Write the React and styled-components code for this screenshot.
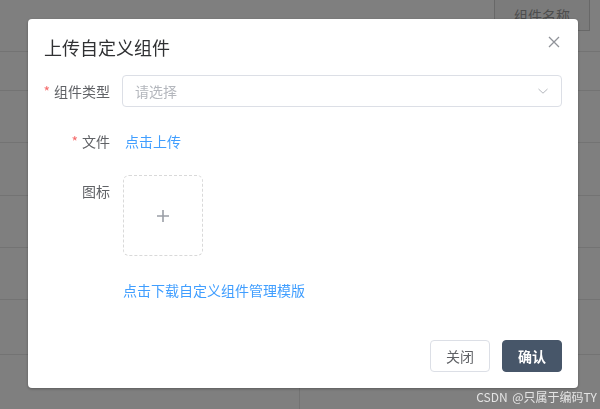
// Libs
import React from 'react';
import styled, { createGlobalStyle } from 'styled-components';

// Styles
const GlobalStyle = createGlobalStyle`
	html, body {
		margin: 0;
		padding: 0;
		width: 600px;
		height: 409px;
		overflow: hidden;
		background: #fff;
		font-family: 'Noto Sans CJK SC', 'Noto Sans', sans-serif;
	}
	* {
		box-sizing: border-box;
	}
`;

const Page = styled.div`
	position: relative;
	width: 600px;
	height: 409px;
	display: flex;
	flex-direction: column;
	background: #fff;
`;

const TableRow = styled.div`
	height: ${(props) => props.h}px;
	flex-shrink: 0;
	display: grid;
	grid-template-columns: 300px 1fr;
	border-bottom: ${(props) => (props.last ? 'none' : '1px solid #e6e6e6')};
`;

const TableCell = styled.div`
	border-right: ${(props) => (props.divider ? '1px solid #e6e6e6' : 'none')};
	display: flex;
	justify-content: flex-end;
	align-items: flex-start;
`;

const HeaderTab = styled.div`
	margin-right: 10px;
	width: 96px;
	height: 31px;
	display: flex;
	justify-content: center;
	align-items: center;
	border: 1px solid #d0d0d0;
	border-top: none;
	border-radius: 0 0 0 4px;
	background: #f7f7f7;
	color: #9a9a9a;
	font-size: 14px;
`;

const Overlay = styled.div`
	position: fixed;
	top: 0;
	left: 0;
	right: 0;
	bottom: 0;
	padding: 19px 0 0 28px;
	background: rgba(0, 0, 0, 0.5);
	z-index: 5;
`;

const Dialog = styled.div`
	width: 550px;
	height: 369px;
	display: flex;
	flex-direction: column;
	border-radius: 4px;
	background: #fff;
	box-shadow: 0 1px 3px rgba(0, 0, 0, 0.3);
`;

const DialogHeader = styled.div`
	padding: 16px 16px 0 16px;
	height: 40px;
	display: flex;
	justify-content: space-between;
	align-items: flex-start;
`;

const DialogTitle = styled.span`
	color: #303133;
	font-size: 18px;
	line-height: 24px;
`;

const CloseButton = styled.button`
	margin-right: 0;
	margin-top: -1px;
	padding: 0;
	width: 16px;
	height: 16px;
	border: none;
	background: transparent;
	cursor: pointer;
	display: flex;
	justify-content: center;
	align-items: center;
`;

const DialogBody = styled.div`
	padding: 16px 16px 0 0;
	flex: 1;
	display: flex;
	flex-direction: column;
`;

const FormRow = styled.div`
	margin-bottom: ${(props) => props.gap ?? 18}px;
	display: flex;
	align-items: flex-start;
`;

const FormLabel = styled.label`
	padding-right: 12px;
	width: 94px;
	flex-shrink: 0;
	text-align: right;
	color: #606266;
	font-size: 14px;
	line-height: 32px;
`;

const Required = styled.span`
	margin-right: 4px;
	color: #f56c6c;
`;

const FormContent = styled.div`
	flex: 1;
	min-height: 32px;
	display: flex;
	align-items: center;
`;

const Select = styled.div`
	padding: 0 12px;
	width: 100%;
	height: 32px;
	display: flex;
	justify-content: space-between;
	align-items: center;
	border: 1px solid #dcdfe6;
	border-radius: 4px;
	cursor: pointer;
`;

const Placeholder = styled.span`
	color: #b4b7bd;
	font-size: 14px;
`;

const Link = styled.a`
	margin-left: ${(props) => (props.inset ? '3px' : '1px')};
	color: #409eff;
	font-size: 14px;
	line-height: 32px;
	text-decoration: none;
	cursor: pointer;
`;

const UploadBox = styled.div`
	margin-left: 1px;
	width: 80px;
	height: 81px;
	display: flex;
	justify-content: center;
	align-items: center;
	border: 1px dashed #d9d9d9;
	border-radius: 6px;
	cursor: pointer;
`;

const DialogFooter = styled.div`
	padding: 0 16px 16px 0;
	display: flex;
	justify-content: flex-end;
	gap: 12px;
`;

const Button = styled.button`
	width: 60px;
	height: 32px;
	padding: 0;
	border: 1px solid ${(props) => (props.primary ? '#475669' : '#dcdfe6')};
	border-radius: 4px;
	background: ${(props) => (props.primary ? '#475669' : '#fff')};
	color: ${(props) => (props.primary ? '#fff' : '#606266')};
	font-family: 'Noto Sans CJK SC', sans-serif;
	font-size: 14px;
	font-weight: ${(props) => (props.primary ? '700' : '400')};
	cursor: pointer;
`;

const Watermark = styled.span`
	position: fixed;
	right: 3px;
	bottom: 5px;
	color: #e4e4e4;
	font-family: 'Noto Sans CJK SC', sans-serif;
	font-size: 12px;
	line-height: 14px;
	word-spacing: 2px;
	z-index: 6;
`;

const rows = [52, 39, 52, 53, 52, 52, 55, 54];

const App = () => (
	<>
		<GlobalStyle />
		<Page>
			{rows.map((h, i) => (
				<TableRow key={i} h={h} last={i === rows.length - 1}>
					<TableCell divider={i === rows.length - 1} />
					<TableCell>{i === 0 && <HeaderTab>组件名称</HeaderTab>}</TableCell>
				</TableRow>
			))}
		</Page>
		<Overlay>
			<Dialog>
				<DialogHeader>
					<DialogTitle>上传自定义组件</DialogTitle>
					<CloseButton aria-label="关闭">
						<svg width="12" height="12" viewBox="0 0 12 12">
							<path d="M1 1 L11 11 M11 1 L1 11" stroke="#909399" strokeWidth="1.3" fill="none" />
						</svg>
					</CloseButton>
				</DialogHeader>
				<DialogBody>
					<FormRow>
						<FormLabel><Required>*</Required>组件类型</FormLabel>
						<FormContent>
							<Select>
								<Placeholder>请选择</Placeholder>
								<svg width="12" height="12" viewBox="0 0 12 12">
									<path d="M1.5 4 L6 8.2 L10.5 4" stroke="#b4b7bd" strokeWidth="1" fill="none" />
								</svg>
							</Select>
						</FormContent>
					</FormRow>
					<FormRow>
						<FormLabel><Required>*</Required>文件</FormLabel>
						<FormContent>
							<Link inset>点击上传</Link>
						</FormContent>
					</FormRow>
					<FormRow>
						<FormLabel>图标</FormLabel>
						<FormContent>
							<UploadBox>
								<svg width="14" height="14" viewBox="0 0 14 14">
									<path d="M7 1 V13 M1 7 H13" stroke="#9a9ea6" strokeWidth="1.6" fill="none" />
								</svg>
							</UploadBox>
						</FormContent>
					</FormRow>
					<FormRow gap={0}>
						<FormLabel />
						<FormContent>
							<Link>点击下载自定义组件管理模版</Link>
						</FormContent>
					</FormRow>
				</DialogBody>
				<DialogFooter>
					<Button>关闭</Button>
					<Button primary>确认</Button>
				</DialogFooter>
			</Dialog>
		</Overlay>
		<Watermark>CSDN @只属于编码TY</Watermark>
	</>
);

export default App;
